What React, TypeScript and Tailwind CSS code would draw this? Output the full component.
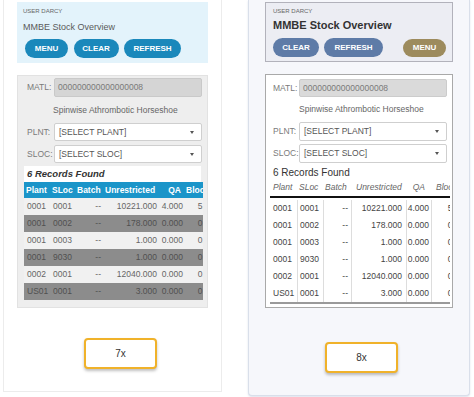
import type { ReactNode } from 'react';

const rows = [
  ['0001', '0001', '--', '10221.000', '4.000', '5.000'],
  ['0001', '0002', '--', '178.000', '0.000', '0.000'],
  ['0001', '0003', '--', '1.000', '0.000', '0.000'],
  ['0001', '9030', '--', '1.000', '0.000', '0.000'],
  ['0002', '0001', '--', '12040.000', '0.000', '0.000'],
  ['US01', '0001', '--', '3.000', '0.000', '0.000'],
];

function Caret() {
  return (
    <svg width="4" height="3" viewBox="0 0 4 3" className="shrink-0">
      <path d="M0 0 L4 0 L2 3 Z" fill="#555" />
    </svg>
  );
}

function Field({ label, children, className }: { label: string; children: ReactNode; className: string }) {
  return (
    <div className={`flex items-center ${className}`}>
      <span className="w-[36px] shrink-0 pl-[9px] text-[8.5px] text-[#7a7a7a]">{label}</span>
      {children}
    </div>
  );
}

function SelectBox({ text, h }: { text: string; h: string }) {
  return (
    <div className={`flex-1 ${h} flex items-center justify-between bg-white border border-[#cfcfcf] rounded-[2px] pl-[4px] pr-[7px] text-[8.5px] text-[#555]`}>
      <span>{text}</span>
      <Caret />
    </div>
  );
}

function ZoomBadge({ label, offset }: { label: string; offset: string }) {
  return (
    <div className={`mt-auto mb-[22px] ${offset}`}>
      <div className="w-[73px] h-[31px] flex items-center justify-center bg-white border-2 border-[#f0b22a] rounded-[4px] shadow-[0_2px_3px_rgba(0,0,0,0.25)] text-[10px] text-[#333]">
        {label}
      </div>
    </div>
  );
}

function OldPhone() {
  return (
    <div className="w-[219px] h-[392px] ml-[3px] flex flex-col border-x border-b border-[#ececec] bg-white px-[13px] pt-[2px]">
      <div className="h-[61px] bg-[#e3f3fb] pl-[6px] pt-[5px]">
        <div className="text-[6px] leading-[8px] text-[#666]">USER DARCY</div>
        <div className="mt-[6px] text-[9px] leading-[12px] text-[#5a5a5a]">MMBE Stock Overview</div>
        <div className="mt-[6px] ml-[2px] flex gap-[5.5px]">
          {[
            ['MENU', 'w-[43px]'],
            ['CLEAR', 'w-[45px]'],
            ['REFRESH', 'w-[57px]'],
          ].map(([t, w]) => (
            <div key={t} className={`${w} h-[19px] rounded-full bg-[#1a88bb] flex items-center justify-center text-white text-[8px] font-bold`}>
              {t}
            </div>
          ))}
        </div>
      </div>

      <div className="mt-[12px] h-[233px] bg-[#eeeeee] border border-[#e2e2e2] flex flex-col">
        <Field label="MATL:" className="mt-[2px]">
          <div className="flex-1 h-[19px] mr-[5px] bg-[#d5d5d5] border border-[#c9c9c9] rounded-[2px] pl-[3px] flex items-center text-[8.5px] text-[#7a7a7a]">
            000000000000000008
          </div>
        </Field>
        <div className="h-[26px] pl-[35px] flex items-center text-[8.5px] text-[#666]">Spinwise Athrombotic Horseshoe</div>
        <Field label="PLNT:" className="mr-[5px]">
          <SelectBox text="[SELECT PLANT]" h="h-[18px]" />
        </Field>
        <Field label="SLOC:" className="mt-[4px] mr-[5px]">
          <SelectBox text="[SELECT SLOC]" h="h-[18px]" />
        </Field>
        <div className="mx-[6px] mt-[3px] h-[16px] bg-white flex items-center pl-[3px] text-[9.5px] font-bold italic text-[#333]">
          6 Records Found
        </div>
        <div className="mx-[6px] w-[179px] overflow-hidden">
          <div className="w-[199px]">
            <div className="grid grid-cols-[26px_25px_28px_56px_26px_38px] h-[16px] items-center bg-[#1b95c9] text-white text-[8.5px] font-bold">
              <span className="pl-[2px]">Plant</span>
              <span className="pl-[2px]">SLoc</span>
              <span className="pl-[2px]">Batch</span>
              <span className="pl-[2px]">Unrestricted</span>
              <span className="text-right pr-[4px]">QA</span>
              <span className="pl-[1px]">Bloc</span>
            </div>
            {rows.map((r, i) => (
              <div
                key={i}
                className={`grid grid-cols-[26px_25px_28px_56px_26px_38px] h-[17px] items-center text-[8.5px] ${
                  i % 2 === 0 ? 'bg-[#f1f1f1] text-[#666]' : 'bg-[#8c8c8c] text-[#505050]'
                }`}
              >
                <span className="pl-[3px]">{r[0]}</span>
                <span className="pl-[3px]">{r[1]}</span>
                <span className="text-right pr-[2px]">{r[2]}</span>
                <span className="text-right pr-[2px]">{r[3]}</span>
                <span className="text-right pr-[2px]">{r[4]}</span>
                <span className="text-right pr-[4px]">{r[5]}</span>
              </div>
            ))}
          </div>
        </div>
      </div>

      <ZoomBadge label="7x" offset="ml-[67px]" />
    </div>
  );
}

function NewPhone() {
  return (
    <div className="w-[222px] h-[396px] ml-[26px] flex flex-col border-x border-b border-[#d9dfea] rounded-b-[4px] bg-[#f6f7fb] px-[16px] pt-[2px] shadow-[0_1px_2px_rgba(120,140,180,0.25)]">
      <div className="h-[60px] bg-[#ecedf3] border border-[#b2b2bb] pl-[7px] pr-[6px] pt-[4px]">
        <div className="text-[6px] leading-[8px] text-[#666]">USER DARCY</div>
        <div className="mt-[4px] text-[11px] leading-[13px] font-bold text-[#333]">MMBE Stock Overview</div>
        <div className="mt-[6px] flex items-center">
          <div className="w-[46px] h-[19px] rounded-full bg-[#5e7ba7] flex items-center justify-center text-white text-[8px] font-bold">CLEAR</div>
          <div className="ml-[5px] w-[59px] h-[19px] rounded-full bg-[#5e7ba7] flex items-center justify-center text-white text-[8px] font-bold">REFRESH</div>
          <div className="ml-auto w-[43px] h-[18px] rounded-full bg-[#9d8b5d] flex items-center justify-center text-white text-[8px] font-bold">MENU</div>
        </div>
      </div>

      <div className="mt-[12px] h-[234px] bg-white border border-[#a9a9a9] flex flex-col">
        <div className="flex items-center mt-[4px]">
          <span className="w-[33px] shrink-0 pl-[7px] text-[8.5px] text-[#7a7a7a]">MATL:</span>
          <div className="flex-1 h-[18px] mr-[5px] bg-[#dadada] border border-[#cccccc] rounded-[2px] pl-[3px] flex items-center text-[8.5px] text-[#7a7a7a]">
            000000000000000008
          </div>
        </div>
        <div className="h-[25px] pl-[33px] flex items-center text-[8.5px] text-[#666]">Spinwise Athrombotic Horseshoe</div>
        <div className="flex items-center">
          <span className="w-[33px] shrink-0 pl-[7px] text-[8.5px] text-[#7a7a7a]">PLNT:</span>
          <div className="flex-1 mr-[5px] flex">
            <SelectBox text="[SELECT PLANT]" h="h-[19px]" />
          </div>
        </div>
        <div className="flex items-center mt-[3px]">
          <span className="w-[33px] shrink-0 pl-[7px] text-[8.5px] text-[#7a7a7a]">SLOC:</span>
          <div className="flex-1 mr-[5px] flex">
            <SelectBox text="[SELECT SLOC]" h="h-[19px]" />
          </div>
        </div>
        <div className="mt-[2px] h-[14px] pl-[7px] flex items-center text-[10px] text-[#333]">6 Records Found</div>
        <div className="ml-[4px] w-[180px] overflow-hidden">
          <div className="w-[201px]">
            <div className="grid grid-cols-[28px_26px_28px_55px_25px_39px] h-[19px] items-center border-b-2 border-[#111] text-[8.5px] italic text-[#666]">
              <span className="pl-[3px]">Plant</span>
              <span className="pl-[1px]">SLoc</span>
              <span className="pl-[1px]">Batch</span>
              <span className="pl-[4px]">Unrestricted</span>
              <span className="text-right pr-[7px]">QA</span>
              <span className="pl-[4px]">Bloc</span>
            </div>
            <div className="pt-[2px] border-b-2 border-[#9a9a9a]">
              {rows.map((r, i) => (
                <div key={i} className="grid grid-cols-[28px_26px_28px_55px_25px_39px] h-[17px] text-[8.5px] text-[#444]">
                  <span className="pl-[3px] flex items-center border-r border-[#dddddd]">{r[0]}</span>
                  <span className="pl-[2px] flex items-center border-r border-[#dddddd]">{r[1]}</span>
                  <span className="pr-[3px] flex items-center justify-end border-r border-[#dddddd]">{r[2]}</span>
                  <span className="pr-[4px] flex items-center justify-end border-r border-[#dddddd]">{r[3]}</span>
                  <span className="pr-[2px] flex items-center justify-end border-r border-[#dddddd]">{r[4]}</span>
                  <span className="pr-[2px] flex items-center justify-end">{r[5]}</span>
                </div>
              ))}
            </div>
          </div>
        </div>
      </div>

      <ZoomBadge label="8x" offset="ml-[60px]" />
    </div>
  );
}

export default function App() {
  return (
    <div className="w-[474px] h-[397px] overflow-hidden bg-white flex items-start font-['Liberation_Sans',Arial,sans-serif]">
      <OldPhone />
      <NewPhone />
    </div>
  );
}
